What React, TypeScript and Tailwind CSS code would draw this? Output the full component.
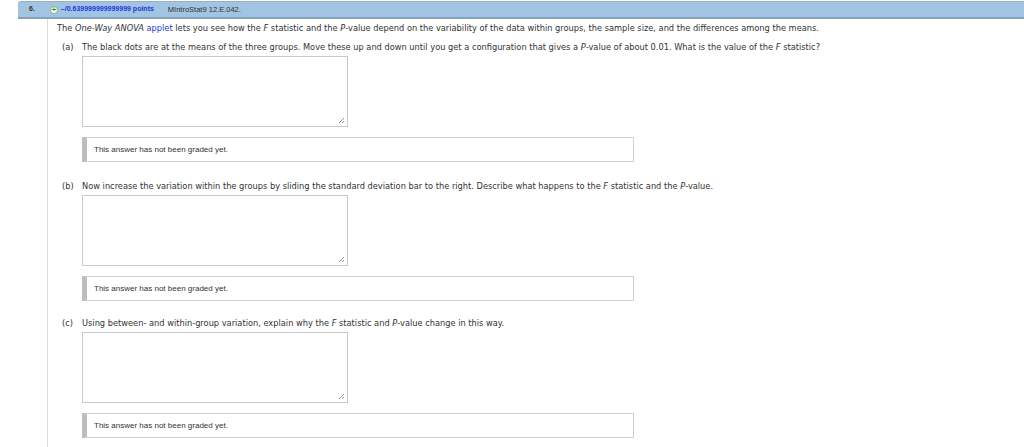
import React from 'react';

const Graded: React.FC = () => (
  <div className="mt-[10px] w-[552px] h-[25px] border border-[#cfcfcf] border-l-[5px] border-l-[#bdbdbd] flex items-center pl-[7px]">
    <span className="text-[8px] text-[#333] font-['Liberation_Sans',Arial,sans-serif]">This answer has not been graded yet.</span>
  </div>
);

const Answer: React.FC = () => (
  <div className="w-[266px] h-[71px] border border-[#c8c8c8] relative bg-white">
    <svg className="absolute right-[2px] bottom-[2px]" width="7" height="7" viewBox="0 0 7 7">
      <path d="M1 6 L6 1 M4 6 L6 4" stroke="#777" strokeWidth="0.8" />
    </svg>
  </div>
);

const Part: React.FC<{ label: string; children: React.ReactNode; top: string }> = ({ label, children, top }) => (
  <div className={top}>
    <div className="flex text-[8.25px] leading-[12px] text-[#333]">
      <span className="w-[25px] pl-[5px]">{label}</span>
      <span>{children}</span>
    </div>
    <div className="pl-[25px] mt-[3px]">
      <Answer />
      <Graded />
    </div>
  </div>
);

export default function App() {
  return (
    <div className="w-[1024px] h-[447px] bg-white overflow-hidden font-['DejaVu_Sans',Verdana,sans-serif]">
      {/* Header */}
      <div className="ml-[18px] mt-[1px] h-[18px] bg-[#a0c4e1] border-t border-t-[#9bb0c0] border-b-2 border-b-[#86a3ba] rounded-tl-[3px] flex items-center font-['Liberation_Sans',Arial,sans-serif] text-[7px]">
        <span className="ml-[11px] font-bold text-[#333]">6.</span>
        <span className="ml-[15px] w-[8px] h-[8px] rounded-full bg-white border border-[#8ab08a] flex items-center justify-center text-[#2a9a2a] text-[8px] leading-none font-bold">+</span>
        <span className="ml-[3px] font-bold text-[#2236d8]">–/0.639999999999999 points</span>
        <span className="ml-[14px] text-[7.5px] text-[#333]">MIntroStat9 12.E.042.</span>
      </div>

      {/* Body */}
      <div className="ml-[47px] border-l border-[#dcdcdc] pl-[9px] h-[430px]">
        <p className="pt-[3px] text-[8.25px] leading-[12px] text-[#333]">
          The <i>One-Way ANOVA</i> <span className="text-[#2a3bd6]">applet</span> lets you see how the <i>F</i> statistic and the <i>P</i>-value depend on the variability of the data within groups, the sample size, and the differences among the means.
        </p>

        <Part label="(a)" top="mt-[7px]">
          The black dots are at the means of the three groups. Move these up and down until you get a configuration that gives a <i>P</i>-value of about 0.01. What is the value of the <i>F</i> statistic?
        </Part>

        <Part label="(b)" top="mt-[18px]">
          Now increase the variation within the groups by sliding the standard deviation bar to the right. Describe what happens to the <i>F</i> statistic and the <i>P</i>-value.
        </Part>

        <Part label="(c)" top="mt-[16px]">
          Using between- and within-group variation, explain why the <i>F</i> statistic and <i>P</i>-value change in this way.
        </Part>
      </div>
    </div>
  );
}
